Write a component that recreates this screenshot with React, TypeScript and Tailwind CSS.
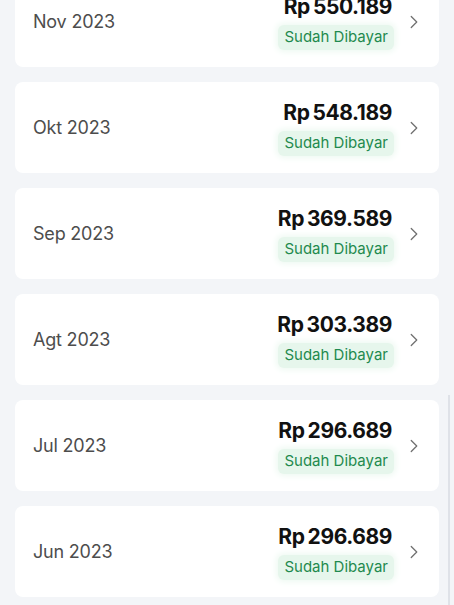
import { ChevronRight } from "lucide-react";

interface Bill {
    period: string;
    amount: string;
}

const bills: Bill[] = [
    { period: "Nov 2023", amount: "550.189" },
    { period: "Okt 2023", amount: "548.189" },
    { period: "Sep 2023", amount: "369.589" },
    { period: "Agt 2023", amount: "303.389" },
    { period: "Jul 2023", amount: "296.689" },
    { period: "Jun 2023", amount: "296.689" },
];

function BillCard({ bill }: { bill: Bill }) {
    return (
        <div className="h-[91px] shrink-0 bg-white rounded-[8px] flex items-center pl-[18px] pr-[14px]">
            <span className="flex-1 text-[18px] text-[#4d4d4d] tracking-[-0.2px]">{bill.period}</span>
            <div className="flex flex-col items-end">
                <p className="text-[21px] font-bold text-[#111] leading-[26px] tracking-[-0.4px]">
                    Rp<span className="ml-[3px]">{bill.amount}</span>
                </p>
                <span className="mt-[5px] mr-[-2px] px-[6px] h-[25px] flex items-center rounded-[6px] bg-[#e6f6ec] shadow-[0_0_6px_2px_#eef9f2] text-[15px] text-[#1f8a4e]">
                    Sudah Dibayar
                </span>
            </div>
            <ChevronRight className="ml-[11px] w-[22px] h-[22px] text-[#707070]" strokeWidth={1.4} />
        </div>
    );
}

export default function App() {
    return (
        <div className="relative w-[454px] h-[605px] overflow-hidden bg-[#f3f5f8]" style={{ fontFamily: "Inter, 'Noto Sans', sans-serif" }}>
            <div className="flex flex-col gap-[15px] px-[15px] mt-[-24px]">
                {bills.map((bill, i) => (
                    <BillCard key={i} bill={bill} />
                ))}
            </div>
            <div className="absolute right-[4px] top-[395px] bottom-0 w-[2px] bg-[#dfe2e8]" />
        </div>
    );
}
